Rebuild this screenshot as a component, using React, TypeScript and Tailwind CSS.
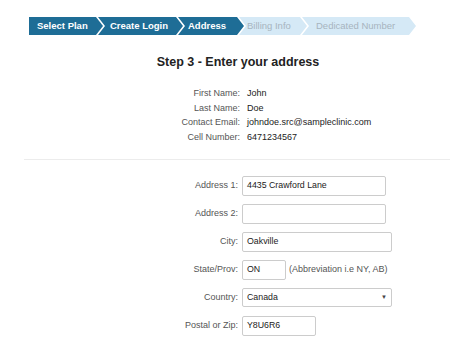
import React from 'react';

type Step = { label: string; width: number; pad: number; active: boolean; first?: boolean };

const steps: Step[] = [
  { label: 'Select Plan', width: 74, pad: 8, active: true, first: true },
  { label: 'Create Login', width: 85, pad: 12, active: true },
  { label: 'Address', width: 66, pad: 10, active: true },
  { label: 'Billing Info', width: 68, pad: 8, active: false },
  { label: 'Dedicated Number', width: 114, pad: 14, active: false },
];

function StepBar() {
  return (
    <div className="flex h-[18px] pl-[29px]">
      {steps.map(s => (
        <div
          key={s.label}
          style={{ width: s.width, paddingLeft: s.pad }}
          className={
            (s.first
              ? '[clip-path:polygon(0_0,calc(100%-7px)_0,100%_50%,calc(100%-7px)_100%,0_100%)] '
              : '-ml-[5px] [clip-path:polygon(0_0,calc(100%-7px)_0,100%_50%,calc(100%-7px)_100%,0_100%,7px_50%)] ') +
            (s.active
              ? 'bg-[#1e6d96] text-white font-bold'
              : 'bg-[#d5e9f6] text-[#a7b4be]') +
            ' flex shrink-0 items-center text-[9.5px] leading-none'
          }
        >
          {s.label}
        </div>
      ))}
    </div>
  );
}

const info = [
  ['First Name:', 'John'],
  ['Last Name:', 'Doe'],
  ['Contact Email:', 'johndoe.src@sampleclinic.com'],
  ['Cell Number:', '6471234567'],
];

function Field({ label, children }: { label: string; children: React.ReactNode }) {
  return (
    <div className="flex items-center h-[20px]">
      <div className="w-[239px] pr-[1px] text-right text-[9px] text-[#555]">{label}</div>
      <div className="ml-[3px] flex items-center">{children}</div>
    </div>
  );
}

function TextBox({ value, width }: { value: string; width: number }) {
  return (
    <div
      style={{ width }}
      className="h-[20px] border border-[#cccccc] rounded-[2px] bg-white px-[4px] flex items-center text-[8.8px] text-[#222]"
    >
      {value}
    </div>
  );
}

export default function App() {
  return (
    <div
      className="w-[474px] h-[339px] overflow-hidden bg-white text-[#333]"
      style={{ fontFamily: '"Liberation Sans", Arial, sans-serif' }}
    >
      <div className="pt-[17px]">
        <StepBar />
      </div>

      <h1 className="mt-[19px] text-center text-[12.5px] leading-[16px] font-bold text-[#222] pl-[2px]">
        Step 3 - Enter your address
      </h1>

      <div className="mt-[16px] grid grid-cols-[240px_1fr] gap-x-[7px] text-[9px] leading-[14.7px]">
        {info.map(([k, v]) => (
          <React.Fragment key={k}>
            <div className="text-right text-[#555]">{k}</div>
            <div className="text-[#222]">{v}</div>
          </React.Fragment>
        ))}
      </div>

      <div className="mx-[24px] mt-[14px] border-t border-[#ececec]" />

      <div className="mt-[16px] flex flex-col gap-[8px]">
        <Field label="Address 1:">
          <TextBox value="4435 Crawford Lane" width={144} />
        </Field>
        <Field label="Address 2:">
          <TextBox value="" width={144} />
        </Field>
        <Field label="City:">
          <TextBox value="Oakville" width={150} />
        </Field>
        <Field label="State/Prov:">
          <TextBox value="ON" width={44} />
          <span className="ml-[3px] text-[9px] text-[#555]">(Abbreviation i.e NY, AB)</span>
        </Field>
        <Field label="Country:">
          <div className="w-[150px] h-[19px] border border-[#cccccc] rounded-[2px] bg-white pl-[4px] pr-[4px] flex items-center justify-between text-[8.8px] text-[#222]">
            <span>Canada</span>
            <span className="text-[6px] text-[#444]">▼</span>
          </div>
        </Field>
        <Field label="Postal or Zip:">
          <TextBox value="Y8U6R6" width={74} />
        </Field>
      </div>
    </div>
  );
}
